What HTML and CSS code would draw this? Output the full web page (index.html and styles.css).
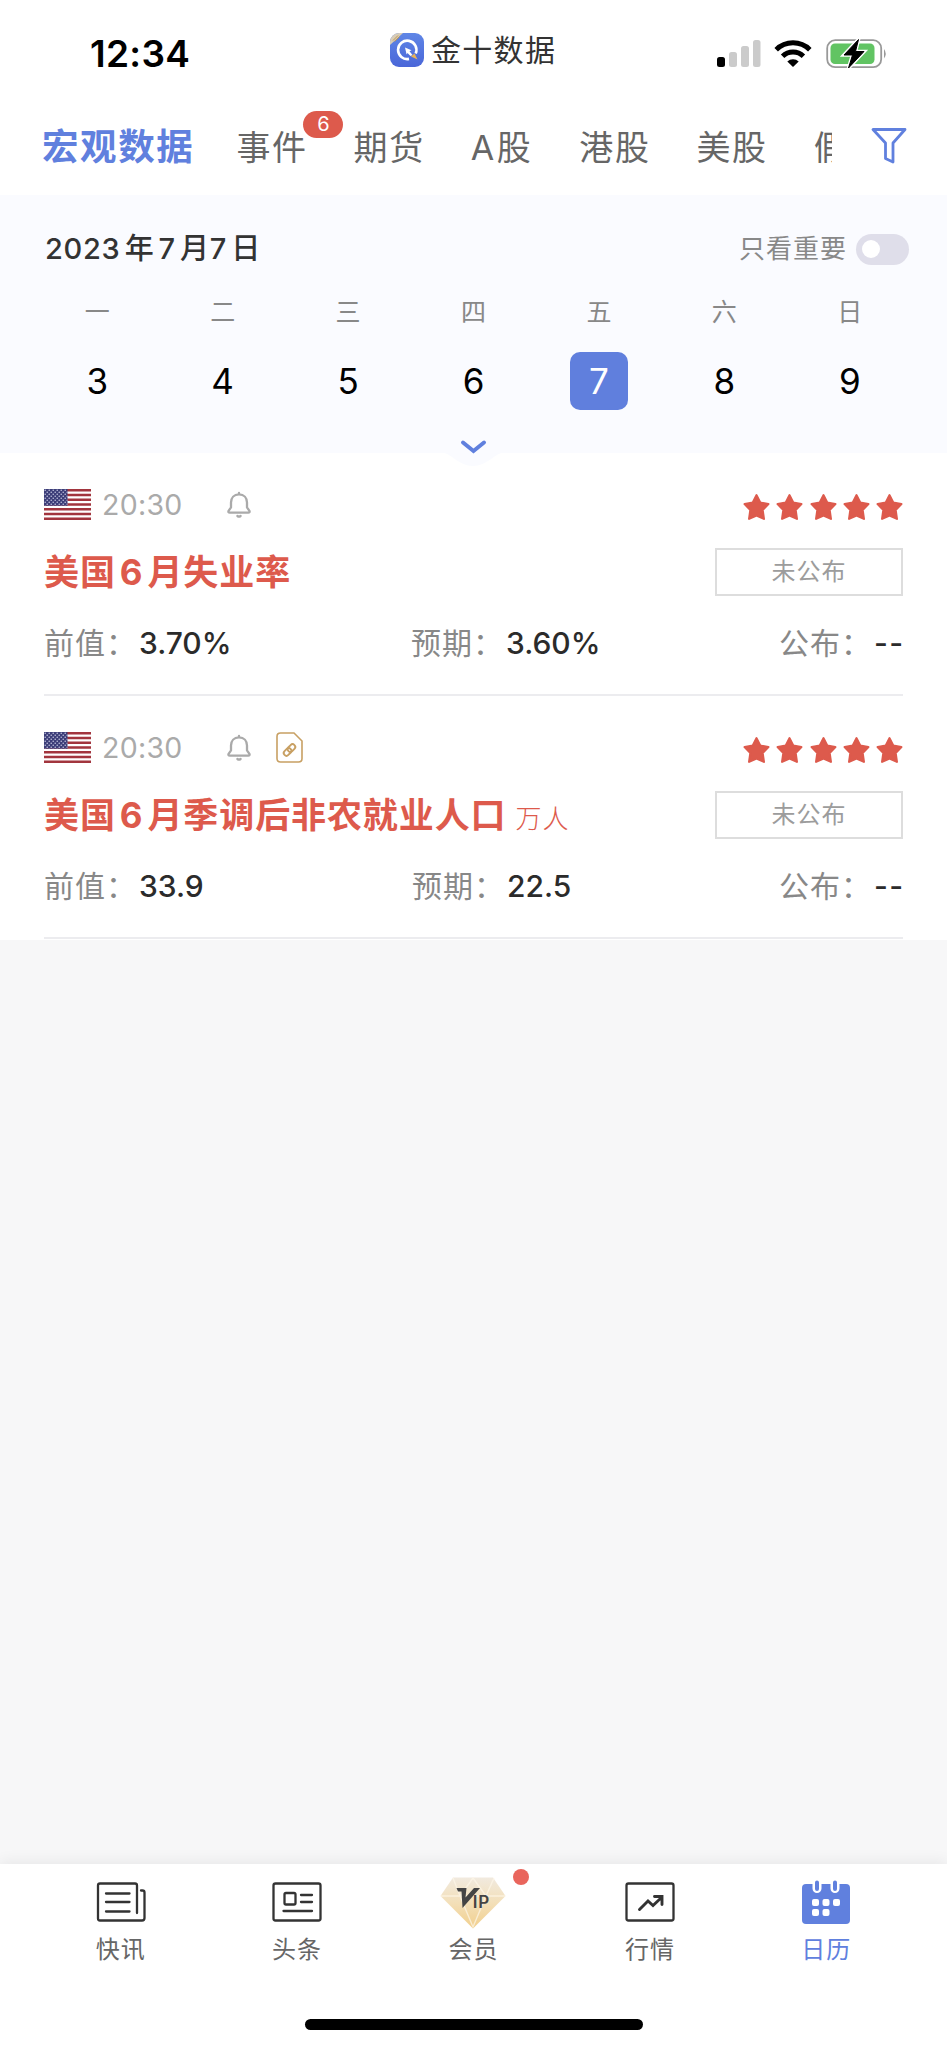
FILE: index.html
```html
<!DOCTYPE html>
<html lang="zh-CN">
<head>
<meta charset="utf-8">
<title>金十数据</title>
<link rel="stylesheet" href="styles.css">
</head>
<body>
<svg width="0" height="0" class="defs">
  <defs>
    <symbol id="star" viewBox="0 0 27 28">
      <path d="M13.5 2.2 L17.2 9.6 L25.4 11 L19.6 17 L20.9 25.8 L13.5 22.4 L6.1 25.8 L7.4 17 L1.6 11 L9.8 9.6 Z" fill="#dd5a4c" stroke="#dd5a4c" stroke-width="2.2" stroke-linejoin="round"/>
    </symbol>
    <symbol id="bell" viewBox="0 0 26 28">
      <g fill="none" stroke="#aaa" stroke-width="2.3" stroke-linejoin="round" stroke-linecap="round">
        <path d="M13 3 V2 M13 3.4 C8 3.400 5 6.800 5 11.600 V16.400 L2.600 19.800 Q1.800 21.600 3.800 21.600 H22.200 Q24.200 21.600 23.400 19.800 L21 16.400 V11.600 C21 6.800 18 3.400 13 3.400 Z"/>
        <path d="M11.400 25 Q13 26.200 14.600 25"/>
      </g>
    </symbol>
    <pattern id="dots" width="4" height="4" patternUnits="userSpaceOnUse">
      <circle cx="1.2" cy="1.2" r=".75" fill="#c9cbe4"/><circle cx="3.2" cy="3.2" r=".75" fill="#c9cbe4"/>
    </pattern>
    <symbol id="flag" viewBox="0 0 47 31">
      <rect width="47" height="31" rx="1" fill="#fff"/>
      <path d="M0 1.2H47M0 5.97H47M0 10.74H47M0 15.5H47M0 20.27H47M0 25.04H47M0 29.8H47" stroke="#a2353e" stroke-width="2.4"/>
      <rect width="23.5" height="16.7" fill="#3c3d78"/>
      <rect width="23.5" height="16.7" fill="url(#dots)"/>
    </symbol>
    <linearGradient id="gold" x1="0" y1="0" x2="0" y2="1">
      <stop offset="0" stop-color="#f1eadf"/><stop offset=".5" stop-color="#f3dfb8"/><stop offset="1" stop-color="#f1cf8c"/>
    </linearGradient>
    <linearGradient id="logo" x1="0" y1="0" x2="0" y2="1">
      <stop offset="0" stop-color="#5f86e6"/><stop offset="1" stop-color="#4a66d8"/>
    </linearGradient>
  </defs>
</svg>
<div class="app">
  <header class="status">
    <span class="clock">12:34</span>
    <div class="brand">
      <svg width="34" height="34" viewBox="0 0 34 34">
        <rect width="34" height="34" rx="9" fill="url(#logo)"/>
        <path d="M0 12V9A9 9 0 0 1 9 0H13Z" fill="#d8cdb8"/>
        <path d="M3 7.5L8 2.5M4.5 8.5L9.500 3.500" stroke="#c79a4c" stroke-width="1"/>
        <path d="M25.700 20.500A9.200 9.200 0 1 0 19 25.900" fill="none" stroke="#fff" stroke-width="2.600"/>
        <path d="M15 14.500L21.500 17.200L19.500 18.300L22.500 22L20.500 23L17.500 20L16.600 21.500Z" fill="#fff"/>
        <path d="M21 23.500L24.500 20.500L27.500 26.500Z" fill="#e9b356"/>
      </svg>
      <span>金十数据</span>
    </div>
    <div class="signals">
      <svg width="44" height="28" viewBox="0 0 44 28">
        <rect x="0" y="17" width="8" height="10" rx="2.500"/>
        <g fill="#cbcbcb"><rect x="12" y="12" width="8" height="15" rx="2.500"/><rect x="24" y="6" width="8" height="21" rx="2.500"/><rect x="36" y="0" width="7.500" height="27" rx="2.500"/></g>
      </svg>
      <svg width="38" height="28" viewBox="0 0 38 28">
        <g fill="none" stroke="#000" stroke-width="5"><path d="M2.200 9.700A24 24 0 0 1 35.800 9.700"/><path d="M8.600 16.300A15 15 0 0 1 29.400 16.300"/></g>
        <path d="M19 27L13.300 21.500A8.200 8.200 0 0 1 24.700 21.500Z"/>
      </svg>
      <svg width="62" height="32" viewBox="0 0 62 32">
        <rect x="1.200" y="2.200" width="54" height="27" rx="8" fill="#fff" stroke="#999" stroke-width="1.800"/>
        <rect x="4.500" y="5.500" width="44" height="20.500" rx="4.500" fill="#61c463"/>
        <path d="M58 11Q61.500 15.800 58 20.500Z" fill="#999"/>
        <path d="M32.500 1.500L18 17H26.500L22.500 30L38 13.500H29.500Z" stroke="#fff" stroke-width="3.600"/>
        <path d="M32.500 1.500L18 17H26.500L22.500 30L38 13.500H29.500Z" stroke="#000" stroke-width="1" stroke-linejoin="round"/>
      </svg>
    </div>
  </header>

  <nav class="tabs">
    <div class="tab-list">
      <span class="tab active">宏观数据</span>
      <span class="tab">事件<b class="badge">6</b></span>
      <span class="tab">期货</span>
      <span class="tab latin">A股</span>
      <span class="tab">港股</span>
      <span class="tab">美股</span>
      <span class="tab">假期</span>
    </div>
    <svg class="filter" width="36" height="38" viewBox="0 0 36 38">
      <path d="M2 2.500H34L22 16V35L14.500 31.500V16Z" fill="none" stroke="#6080de" stroke-width="2.800" stroke-linejoin="round"/>
    </svg>
  </nav>

  <section class="calendar">
    <div class="cal-head">
      <span class="date">2023<i class="cjk-gap"></i>年<i class="cjk-gap"></i>7<i class="cjk-gap"></i>月7<i class="cjk-gap"></i>日</span>
      <span class="only">只看重要<i class="toggle"></i></span>
    </div>
    <div class="week">
      <span>一</span><span>二</span><span>三</span><span>四</span><span>五</span><span>六</span><span>日</span>
    </div>
    <div class="days">
      <span>3</span><span>4</span><span>5</span><span>6</span><span class="today"><b>7</b></span><span>8</span><span>9</span>
    </div>
    <svg class="expand" width="64" height="34" viewBox="0 0 64 34">
      <path d="M0 18C10 19 18 32 32 32S54 19 64 18Z" fill="#fafbff"/>
      <path d="M22 8.500L32.500 17L43 8.500" fill="none" stroke="#6080de" stroke-width="4" stroke-linecap="round"/>
    </svg>
  </section>

  <main class="list">
    <article class="item">
      <div class="meta">
        <svg width="47" height="31"><use href="#flag"/></svg>
        <span class="time">20:30</span>
        <svg class="bell" width="26" height="28"><use href="#bell"/></svg>
        <div class="stars"><svg><use href="#star"/></svg><svg><use href="#star"/></svg><svg><use href="#star"/></svg><svg><use href="#star"/></svg><svg><use href="#star"/></svg></div>
      </div>
      <div class="headline">
        <h2>美国<i class="num">6</i>月失业率</h2>
        <span class="state">未公布</span>
      </div>
      <div class="values">
        <span><em>前值：</em>3.70%</span><span><em>预期：</em>3.60%</span><span class="none"><em>公布：</em>--</span>
      </div>
    </article>
    <article class="item second">
      <div class="meta">
        <svg width="47" height="31"><use href="#flag"/></svg>
        <span class="time">20:30</span>
        <svg class="bell" width="26" height="28"><use href="#bell"/></svg>
        <svg class="doc" width="27" height="31" viewBox="0 0 27 31">
          <path d="M4.500 1H18L26 9V26.500Q26 30 22.500 30H4.500Q1 30 1 26.500V4.500Q1 1 4.500 1Z" fill="none" stroke="#c8a063" stroke-width="1.600"/>
          <g fill="none" stroke="#c8a063" stroke-width="1.900" transform="rotate(-45 13.500 18)"><rect x="6.500" y="15.300" width="8.500" height="5.400" rx="2.700"/><rect x="12" y="15.300" width="8.500" height="5.400" rx="2.700"/></g>
        </svg>
        <div class="stars"><svg><use href="#star"/></svg><svg><use href="#star"/></svg><svg><use href="#star"/></svg><svg><use href="#star"/></svg><svg><use href="#star"/></svg></div>
      </div>
      <div class="headline">
        <h2>美国<i class="num">6</i>月季调后非农就业人口<small>万人</small></h2>
        <span class="state">未公布</span>
      </div>
      <div class="values">
        <span><em>前值：</em>33.9</span><span><em>预期：</em>22.5</span><span class="none"><em>公布：</em>--</span>
      </div>
    </article>
  </main>

  <footer class="dock">
    <div class="dock-items">
      <a class="dock-item">
        <svg width="66" height="56" viewBox="0 0 66 56"><g fill="none" stroke="#333" stroke-width="2.300" stroke-linecap="round" stroke-linejoin="round"><path d="M49 42V14.500Q49 12.500 47 12.500H12Q10 12.500 10 14.500V47.500Q10 49.500 12 49.500H54Q56.500 49.500 56.500 47V21.500Q56.500 19.500 54.500 19.500H53"/><path d="M18 22.500H41.500M18 31H41.500M18 40.500H41.500"/></g></svg>
        <span>快讯</span>
      </a>
      <a class="dock-item">
        <svg width="66" height="56" viewBox="0 0 66 56"><g fill="none" stroke="#333" stroke-width="2.300" stroke-linecap="round"><rect x="9.500" y="12.500" width="47" height="37" rx="2"/><rect x="20.500" y="22" width="11" height="11.500" rx="1.500"/><path d="M37 24H48M37 31H48M19.500 40H48"/></g></svg>
        <span>头条</span>
      </a>
      <a class="dock-item">
        <svg width="66" height="56" viewBox="0 0 66 56">
          <path d="M13 6.500H53L65.500 25L33 57.500L0.500 25Z" fill="url(#gold)"/>
          <g stroke="#fdf6e8" stroke-width="1.400" fill="none" opacity=".7"><path d="M1 25H65M13 7L20 25L33 56L46 25L54 7M20 25L33 7L46 25"/></g>
          <path d="M16.500 17H26.500L25.500 26.500L34 17H40L22.500 37L21.500 20.500H18Z" fill="#444"/>
          <text x="32.800" y="37" class="vip-text">IP</text>
        </svg>
        <i class="dot"></i>
        <span>会员</span>
      </a>
      <a class="dock-item">
        <svg width="66" height="56" viewBox="0 0 66 56"><g fill="none" stroke="#333" stroke-width="2.300"><rect x="9.500" y="12.500" width="47" height="37" rx="2"/><path d="M22.500 38.500L31 30L36 34.500L44.500 26.500M37.500 25.500H45V33.500" stroke-width="2.900" stroke-linecap="round"/></g></svg>
        <span>行情</span>
      </a>
      <a class="dock-item current">
        <svg width="66" height="56" viewBox="0 0 66 56"><rect x="9" y="13" width="48" height="40" rx="4" fill="#6080de"/><g stroke-linecap="round"><path d="M24 11.500V17.500M42 11.500V17.500" stroke="#fff" stroke-width="9"/><path d="M24 11.500V18M42 11.500V18" stroke="#6080de" stroke-width="4"/></g><g fill="#fff"><rect x="19" y="28" width="7" height="7" rx="2"/><rect x="29.500" y="28" width="7" height="7" rx="2"/><rect x="40" y="28" width="7" height="7" rx="2"/><rect x="19" y="38" width="7" height="7" rx="2"/><rect x="29.500" y="38" width="7" height="7" rx="2"/></g></svg>
        <span>日历</span>
      </a>
    </div>
    <div class="home-bar"></div>
  </footer>
</div>
</body>
</html>
```
FILE: styles.css
```css
* { box-sizing: border-box; }
body { margin: 0; font-family: Inter, "Noto Sans CJK SC", sans-serif; color: #333; }
i, em { font-style: normal; }
svg { display: block; flex: none; }
.defs { position: absolute; }
.app { width: 947px; height: 2048px; display: flex; flex-direction: column; background: #f7f7f8; overflow: hidden; }

.status { height: 105px; background: #fff; display: flex; align-items: flex-start; padding-left: 90px; }
.clock { width: 300px; padding-top: 31px; font-size: 37px; line-height: 45px; font-weight: 600; color: #000; letter-spacing: .3px; }
.brand { width: 327px; padding-top: 33px; display: flex; gap: 7px; font-size: 30px; line-height: 34px; letter-spacing: 1.3px; }
.signals { display: flex; padding-top: 40px; }
.signals svg:nth-child(2) { margin-left: 13px; }
.signals svg:nth-child(3) { margin: -2px 0 0 14px; }

.tabs { height: 90px; background: #fff; display: flex; }
.tab-list { width: 832px; padding-left: 42px; display: flex; overflow: hidden; gap: 46px; white-space: nowrap; }
.tab { flex: none; font-size: 34px; line-height: 85px; color: #666; letter-spacing: 1.6px; position: relative; }
.tab.latin { letter-spacing: 2.500px; }
.tab.active { margin-right: -4px; font-size: 36.500px; font-weight: 700; color: #6080de; }
.badge { position: absolute; left: 67px; top: 6px; width: 40px; height: 27px; border-radius: 14px; background: #dd5a4c; color: #fff; font-size: 20px; font-weight: 400; line-height: 27px; text-align: center; letter-spacing: 0; }
.filter { margin: 22px 0 0 39px; }

.calendar { height: 258px; background: #fafbff; position: relative; }
.cal-head { height: 99px; padding: 34px 38px 0 45px; display: flex; justify-content: space-between; line-height: 40px; }
.date { font-size: 29px; font-weight: 500; letter-spacing: .7px; }
.cjk-gap { display: inline-block; width: 4.200px; }
.only { display: flex; font-size: 26px; letter-spacing: 1px; color: #888; }
.toggle { width: 53px; height: 31px; margin: 5px 0 0 9px; border-radius: 16px; background: #dfdeea; padding: 6px; }
.toggle::before { content: ""; display: block; width: 18px; height: 18px; border-radius: 9px; background: #fff; }
.week, .days { display: grid; grid-template-columns: repeat(7, 1fr); padding: 0 34.5px; text-align: center; }
.week { font-size: 25px; line-height: 36px; color: #888; }
.days { margin-top: 21px; font-size: 35px; line-height: 60px; color: #000; }
.today b { display: block; width: 58px; height: 58px; margin: 1px auto 0; border-radius: 10px; background: #607fdd; color: #fff; font-weight: 400; line-height: 58px; }
.expand { position: absolute; left: 441px; top: 239px; }

.list { background: #fff; padding: 0 44px 1px; }
.item { height: 243px; border-bottom: 2px solid #ececef; }
.meta { height: 83px; padding-top: 36px; display: flex; }
.time { margin-left: 11px; width: 124px; font-size: 28.5px; line-height: 31px; color: #aaa; letter-spacing: .3px; }
.bell { margin-top: 2px; }
.doc { margin-left: 24px; }
.stars { display: flex; gap: 6.200px; margin: 4px 0 0 auto; }
.stars svg { width: 27px; height: 28px; }
.headline { display: flex; justify-content: space-between; padding-top: 12px; height: 81px; }
.headline h2 { margin: 0; font-size: 35px; line-height: 49px; font-weight: 700; color: #dd5a4c; letter-spacing: .9px; white-space: nowrap; }
.num { margin: 0 4px; }
.headline small { margin-left: 9px; font-size: 26px; font-weight: 300; letter-spacing: 1px; }
.state { width: 188px; height: 48px; border: 2px solid #ddd; font-size: 24px; line-height: 43px; letter-spacing: 1px; color: #9c9c9c; text-align: center; }
.values { display: grid; grid-template-columns: 367px 369px auto; font-size: 30px; line-height: 52px; font-weight: 500; color: #2b2b2b; white-space: nowrap; }
.values em { display: inline-block; width: 95px; font-weight: 400; letter-spacing: 1px; color: #888; }
.values .none { letter-spacing: 1.500px; margin-left: -1px; }
.second .values { grid-template-columns: 368px 368px auto; }

.dock { margin-top: auto; height: 184px; background: #fff; box-shadow: 0 -2px 14px rgba(0, 0, 20, .07); }
.dock-items { display: grid; grid-template-columns: repeat(5, 1fr); padding: 0 32.500px; }
.dock-item { position: relative; display: flex; flex-direction: column; align-items: center; font-size: 24px; line-height: 36px; letter-spacing: 1px; color: #666; }
.dock-item svg { margin-top: 7px; overflow: visible; }
.dock-item span { margin-top: 5px; }
.dock-item.current { color: #6080de; }
.dot { position: absolute; left: 128px; top: 5px; width: 16px; height: 16px; border-radius: 50%; background: #e9655c; }
.vip-text { font: 600 17px Inter, sans-serif; fill: #444; letter-spacing: .8px; }
.home-bar { width: 338px; height: 11px; margin: 51px auto 0; border-radius: 6px; background: #000; }
```
